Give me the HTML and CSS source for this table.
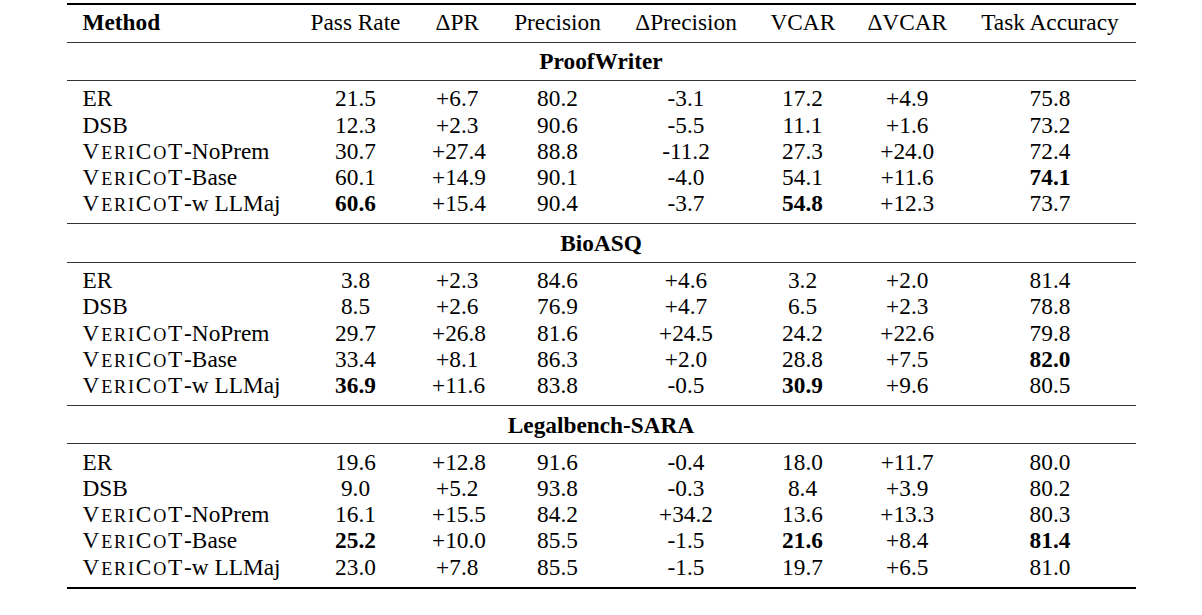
FILE: index.html
```html
<!DOCTYPE html>
<html lang="en">
<head>
<meta charset="utf-8">
<title>Results</title>
<link rel="stylesheet" href="styles.css">
</head>
<body>
<table class="results">
  <colgroup>
    <col class="c-method"><col class="c-pass"><col class="c-dpr"><col class="c-prec">
    <col class="c-dprec"><col class="c-vcar"><col class="c-dvcar"><col class="c-task">
  </colgroup>
  <thead>
    <tr>
      <th class="name method">Method</th><th>Pass Rate</th><th>ΔPR</th><th>Precision</th>
      <th>ΔPrecision</th><th>VCAR</th><th>ΔVCAR</th><th>Task Accuracy</th>
    </tr>
  </thead>
  <tbody>
    <tr class="section"><td colspan="8">ProofWriter</td></tr>
    <tr class="first"><td class="name">ER</td><td>21.5</td><td>+6.7</td><td>80.2</td><td>-3.1</td><td>17.2</td><td>+4.9</td><td>75.8</td></tr>
    <tr><td class="name">DSB</td><td>12.3</td><td>+2.3</td><td>90.6</td><td>-5.5</td><td>11.1</td><td>+1.6</td><td>73.2</td></tr>
    <tr><td class="name"><span class="vc">V<span class="smc">eri</span>C<span class="smc">o</span>T</span>-NoPrem</td><td>30.7</td><td>+27.4</td><td>88.8</td><td>-11.2</td><td>27.3</td><td>+24.0</td><td>72.4</td></tr>
    <tr><td class="name"><span class="vc">V<span class="smc">eri</span>C<span class="smc">o</span>T</span>-Base</td><td>60.1</td><td>+14.9</td><td>90.1</td><td>-4.0</td><td>54.1</td><td>+11.6</td><td><b>74.1</b></td></tr>
    <tr class="last"><td class="name"><span class="vc">V<span class="smc">eri</span>C<span class="smc">o</span>T</span>-w LLMaj</td><td><b>60.6</b></td><td>+15.4</td><td>90.4</td><td>-3.7</td><td><b>54.8</b></td><td>+12.3</td><td>73.7</td></tr>

    <tr class="section"><td colspan="8">BioASQ</td></tr>
    <tr class="first"><td class="name">ER</td><td>3.8</td><td>+2.3</td><td>84.6</td><td>+4.6</td><td>3.2</td><td>+2.0</td><td>81.4</td></tr>
    <tr><td class="name">DSB</td><td>8.5</td><td>+2.6</td><td>76.9</td><td>+4.7</td><td>6.5</td><td>+2.3</td><td>78.8</td></tr>
    <tr><td class="name"><span class="vc">V<span class="smc">eri</span>C<span class="smc">o</span>T</span>-NoPrem</td><td>29.7</td><td>+26.8</td><td>81.6</td><td>+24.5</td><td>24.2</td><td>+22.6</td><td>79.8</td></tr>
    <tr><td class="name"><span class="vc">V<span class="smc">eri</span>C<span class="smc">o</span>T</span>-Base</td><td>33.4</td><td>+8.1</td><td>86.3</td><td>+2.0</td><td>28.8</td><td>+7.5</td><td><b>82.0</b></td></tr>
    <tr class="last"><td class="name"><span class="vc">V<span class="smc">eri</span>C<span class="smc">o</span>T</span>-w LLMaj</td><td><b>36.9</b></td><td>+11.6</td><td>83.8</td><td>-0.5</td><td><b>30.9</b></td><td>+9.6</td><td>80.5</td></tr>

    <tr class="section"><td colspan="8">Legalbench-SARA</td></tr>
    <tr class="first"><td class="name">ER</td><td>19.6</td><td>+12.8</td><td>91.6</td><td>-0.4</td><td>18.0</td><td>+11.7</td><td>80.0</td></tr>
    <tr><td class="name">DSB</td><td>9.0</td><td>+5.2</td><td>93.8</td><td>-0.3</td><td>8.4</td><td>+3.9</td><td>80.2</td></tr>
    <tr><td class="name"><span class="vc">V<span class="smc">eri</span>C<span class="smc">o</span>T</span>-NoPrem</td><td>16.1</td><td>+15.5</td><td>84.2</td><td>+34.2</td><td>13.6</td><td>+13.3</td><td>80.3</td></tr>
    <tr><td class="name"><span class="vc">V<span class="smc">eri</span>C<span class="smc">o</span>T</span>-Base</td><td><b>25.2</b></td><td>+10.0</td><td>85.5</td><td>-1.5</td><td><b>21.6</b></td><td>+8.4</td><td><b>81.4</b></td></tr>
    <tr class="last final"><td class="name"><span class="vc">V<span class="smc">eri</span>C<span class="smc">o</span>T</span>-w LLMaj</td><td>23.0</td><td>+7.8</td><td>85.5</td><td>-1.5</td><td>19.7</td><td>+6.5</td><td>81.0</td></tr>
  </tbody>
</table>
</body>
</html>
```

FILE: styles.css
```css
html, body {
  margin: 0;
  padding: 0;
  background: #ffffff;
}

body {
  font-family: "Liberation Serif", "Times New Roman", serif;
  color: #000000;
}

.results {
  margin: 3px auto 0;
  width: 1069px;
  border-collapse: collapse;
  table-layout: fixed;
  font-size: 23.3px;
  line-height: 26.2px;
}

.c-method { width: 228px; }
.c-pass { width: 122px; }
.c-dpr { width: 81.5px; }
.c-prec { width: 119px; }
.c-dprec { width: 138px; }
.c-vcar { width: 95px; }
.c-dvcar { width: 114.5px; }
.c-task { width: 171px; }

.results th,
.results td {
  padding: 0 15.5px;
  text-align: center;
  white-space: nowrap;
  font-weight: normal;
}

.results .name {
  text-align: left;
  padding-left: 16px;
}

.results .method {
  font-weight: bold;
}

.results thead tr {
  border-top: 2px solid #000000;
  border-bottom: 1px solid #333333;
}

.results thead th {
  padding-top: 3.5px;
  padding-bottom: 7px;
}

.results .section {
  border-top: 1px solid #333333;
  border-bottom: 1px solid #333333;
}

.results .section td {
  font-weight: bold;
  padding-top: 5.5px;
  padding-bottom: 5.5px;
}

.results .first td {
  padding-top: 4.5px;
}

.results .last td {
  padding-bottom: 7px;
}

.results .final td {
  padding-bottom: 7.5px;
}

.results .final {
  border-bottom: 2px solid #000000;
}

.vc {
  letter-spacing: 1.8px;
}

.smc {
  text-transform: uppercase;
  font-size: 0.78em;
  line-height: 1;
}
```
